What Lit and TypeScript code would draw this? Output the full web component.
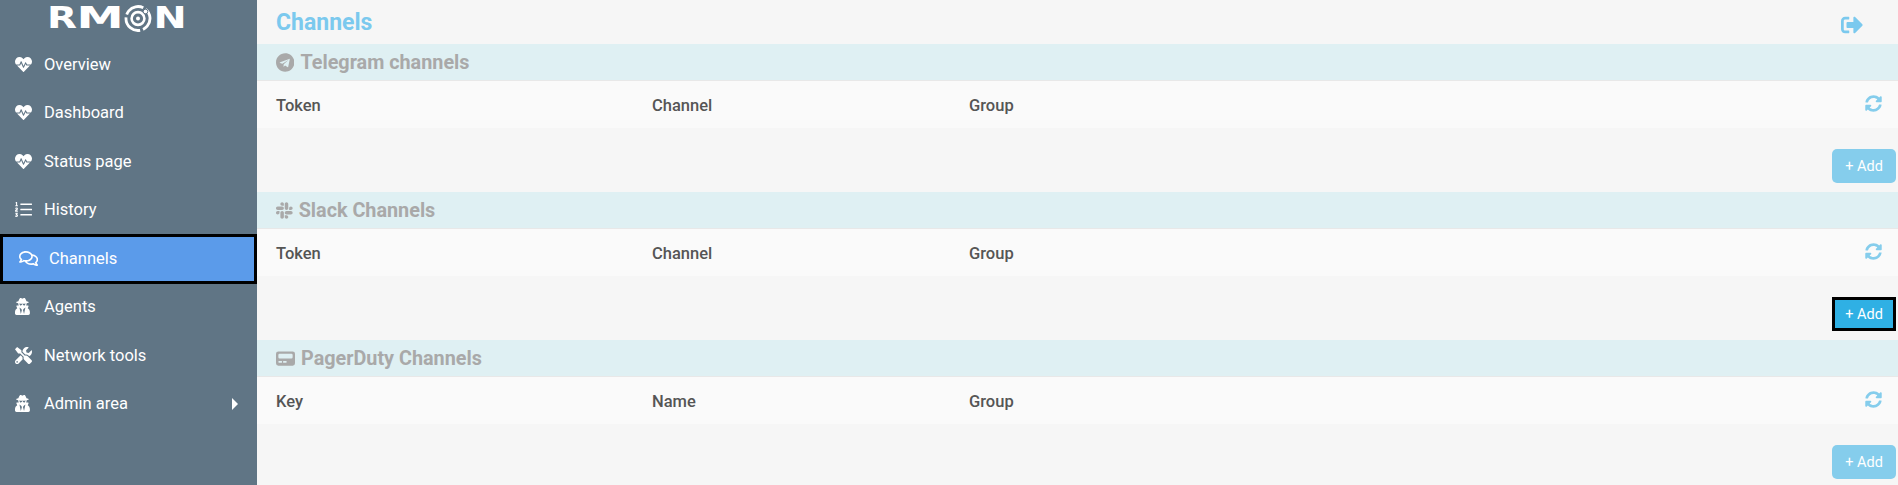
import { LitElement, html, css, svg } from "lit";
import { customElement } from "lit/decorators.js";

const ic = (vb: number, d: string, cls = "") =>
  html`<svg class="ic ${cls}" viewBox="0 0 ${vb} 512" fill="currentColor" aria-hidden="true">${svg`<path d="${d}"></path>`}</svg>`;

const P = {
  heart: "M320.2 243.8l-49.7 99.4c-6 12.1-23.4 11.7-28.9-.6l-56.9-126.3-30 71.7H60.6l182.5 186.5c7.1 7.3 18.6 7.3 25.7 0L451.4 288H342.3l-22.1-44.2zM473.7 73.9l-2.4-2.5c-51.5-52.6-135.8-52.6-187.4 0L256 100l-27.9-28.5c-51.5-52.7-135.9-52.7-187.4 0l-2.4 2.4C-10.4 123.7-12.5 203 31 256h102.4l35.9-86.2c5.4-12.9 23.6-13.2 29.4-.4l58.2 129.3 49-97.9c5.9-11.8 22.7-11.8 28.6 0l27.6 55.2H481c43.5-53 41.4-132.3-7.3-182.1z",
  list: "M61.77 401l17.5-20.15a19.92 19.92 0 0 0 5.07-14.19v-3.31C84.34 356 80.5 352 73 352H16a8 8 0 0 0-8 8v16a8 8 0 0 0 8 8h22.83a157.41 157.41 0 0 0-11 12.31l-5.61 7c-4 5.07-5.25 10.13-2.8 14.88l1.05 1.93c3 5.76 6.29 7.88 12.25 7.88h4.73c10.33 0 15.94 2.44 15.94 9.09 0 4.72-4.2 8.22-14.36 8.22a41.54 41.54 0 0 1-15.47-3.12c-6.49-3.88-11.74-3.5-15.6 3.12l-5.59 9.31c-3.72 6.13-3.19 11.72 2.63 15.94 7.71 4.69 20.38 9.44 37 9.44 34.16 0 48.5-22.75 48.5-44.12-.03-14.38-9.12-29.76-28.73-34.88zM500 232H172a12 12 0 0 0-12 12v24a12 12 0 0 0 12 12h328a12 12 0 0 0 12-12v-24a12 12 0 0 0-12-12zm0-160H172a12 12 0 0 0-12 12v24a12 12 0 0 0 12 12h328a12 12 0 0 0 12-12V84a12 12 0 0 0-12-12zm0 320H172a12 12 0 0 0-12 12v24a12 12 0 0 0 12 12h328a12 12 0 0 0 12-12v-24a12 12 0 0 0-12-12zM16 160h64a8 8 0 0 0 8-8v-16a8 8 0 0 0-8-8H64V40a8 8 0 0 0-8-8H32a8 8 0 0 0-7.14 4.42l-8 16A8 8 0 0 0 24 64h8v64H16a8 8 0 0 0-8 8v16a8 8 0 0 0 8 8zm-3.91 160H80a8 8 0 0 0 8-8v-16a8 8 0 0 0-8-8H41.32c3.29-10.29 48.68-18.68 48.68-56.44 0-29.06-25-39.56-44.47-39.56-21.36 0-33.8 10-40.46 18.75-4.37 5.59-3 10.84 2.8 15.37l8.58 6.88c5.61 4.56 11 2.47 16.12-2.44a13.44 13.44 0 0 1 9.46-3.84c3.33 0 9.28 1.56 9.28 8.75C51 248.19 0 257.31 0 304.59v4C0 316 5.08 320 12.09 320z",
  comments: "M532 386.2c27.5-27.1 44-61.1 44-98.2 0-80-76.5-146.1-176.2-157.9C368.3 72.5 294.3 32 208 32 93.1 32 0 103.6 0 192c0 37 16.5 71 44 98.2-15.3 30.7-37.3 54.5-37.7 54.9-6.3 6.7-8.1 16.5-4.4 25 3.6 8.5 12 14 21.2 14 53.5 0 96.7-20.2 125.2-38.8 9.2 2.1 18.7 3.7 28.4 4.9C208.1 407.6 281.8 448 368 448c20.8 0 40.8-2.4 59.8-6.8C456.3 459.7 499.4 480 553 480c9.2 0 17.5-5.5 21.2-14 3.6-8.5 1.9-18.3-4.4-25-.4-.3-22.5-24.1-37.8-54.8zm-392.8-92.3L122.1 305c-14.1 9.1-28.5 16.3-43.1 21.4 2.7-4.7 5.4-9.7 8-14.8l15.5-31.1L77.7 256C64.2 242.6 48 220.7 48 192c0-60.7 73.3-112 160-112s160 51.3 160 112-73.3 112-160 112c-16.5 0-33-1.9-49-5.6l-19.8-4.5zM498.3 352l-24.7 24.4 15.5 31.1c2.6 5.1 5.3 10.1 8 14.8-14.6-5.1-29-12.3-43.1-21.4l-17.1-11.1-19.9 4.6c-16 3.7-32.5 5.6-49 5.6-54 0-102.2-20.1-131.3-49.7C338 339.5 416 272.9 416 192c0-3.4-.4-6.7-.7-10C479.7 196.5 528 238.8 528 288c0 28.7-16.2 50.6-29.7 64z",
  secret: "M383.9 308.3l23.9-62.6c4-10.5-3.7-21.7-15-21.7h-58.5c11-18.9 17.8-40.6 17.8-64v-.3c39.2-7.8 64-19.1 64-31.7 0-13.3-27.3-25.1-70.1-33-9.2-32.8-27-65.8-40.6-82.8-9.5-11.9-25.9-15.6-39.5-8.8l-27.6 13.8c-9 4.5-19.6 4.5-28.6 0L182.1 3.4c-13.6-6.8-30-3.1-39.5 8.8-13.5 17-31.4 50-40.6 82.8-42.7 7.9-70 19.7-70 33 0 12.6 24.8 23.9 64 31.7v.3c0 23.4 6.8 45.1 17.8 64H56.3c-11.5 0-19.2 11.7-14.7 22.3l25.8 60.2C27.3 329.8 0 372.7 0 422.4v44.8C0 491.9 20.1 512 44.8 512h358.4c24.7 0 44.8-20.1 44.8-44.8v-44.8c0-48.4-25.8-90.4-64.1-114.1zM176 480l-41.6-192 49.6 32 24 40-32 120zm96 0l-32-120 24-40 49.6-32L272 480zm41.7-298.5c-3.9 11.9-7 24.6-16.5 33.4-10.1 9.3-48 22.4-64-25-2.8-8.4-15.4-8.4-18.3 0-17 50.2-56 32.4-64 25-9.5-8.8-12.7-21.5-16.5-33.4-.8-2.5-6.3-5.7-6.3-5.8v-10.8c28.3 3.6 61 5.8 96 5.8s67.7-2.1 96-5.8v10.8c-.1.1-5.6 3.2-6.4 5.8z",
  tools: "M501.1 395.7L384 278.6c-23.1-23.1-57.6-27.6-85.4-13.9L192 158.1V96L64 0 0 64l96 128h62.1l106.6 106.6c-13.6 27.8-9.2 62.3 13.9 85.4l117.1 117.1c14.6 14.6 38.2 14.6 52.7 0l52.7-52.7c14.5-14.6 14.5-38.2 0-52.7zM331.7 225c28.3 0 54.9 11 74.9 31l19.4 19.4c15.8-6.9 30.8-16.5 43.8-29.5 37.1-37.1 49.7-89.3 37.9-136.7-2.2-9-13.5-12.1-20.1-5.5l-74.4 74.4-67.9-11.3L334 98.9l74.4-74.4c6.6-6.6 3.4-17.9-5.7-20.2-47.4-11.7-99.6.9-136.6 37.9-28.5 28.5-41.9 66.1-41.2 103.6l82.1 82.1c8.1-1.9 16.5-2.9 24.7-2.9zm-103.9 82l-56.7-56.7L18.7 402.8c-25 25-25 65.5 0 90.5s65.5 25 90.5 0l123.6-123.6c-7.6-19.9-9.9-41.6-5-62.7zM64 472c-13.2 0-24-10.8-24-24 0-13.3 10.7-24 24-24s24 10.7 24 24c0 13.2-10.7 24-24 24z",
  telegram: "M248 8C111 8 0 119 0 256s111 248 248 248 248-111 248-248S385 8 248 8zm121.8 169.9l-40.7 191.8c-3 13.6-11.1 16.9-22.4 10.5l-62-45.7-29.9 28.8c-3.3 3.3-6.1 6.1-12.5 6.1l4.4-63.1 114.9-103.8c5-4.4-1.1-6.9-7.7-2.5l-142 89.4-61.2-19.1c-13.3-4.2-13.6-13.3 2.8-19.7l239.1-92.2c11.1-4 20.8 2.7 17.2 19.5z",
  slack: "M94.12 315.1c0 25.9-21.16 47.06-47.06 47.06S0 341 0 315.1c0-25.9 21.16-47.06 47.06-47.06h47.06v47.06zm23.72 0c0-25.9 21.16-47.06 47.06-47.06s47.06 21.16 47.06 47.06v117.84c0 25.9-21.16 47.06-47.06 47.06s-47.06-21.16-47.06-47.06V315.1zm47.06-188.98c-25.9 0-47.06-21.16-47.06-47.06S139 32 164.9 32s47.06 21.16 47.06 47.06v47.06H164.9zm0 23.72c25.9 0 47.06 21.16 47.06 47.06s-21.16 47.06-47.06 47.06H47.06C21.16 243.96 0 222.8 0 196.9s21.16-47.06 47.06-47.06H164.9zm188.98 47.06c0-25.9 21.16-47.06 47.06-47.06 25.9 0 47.06 21.16 47.06 47.06s-21.16 47.06-47.06 47.06h-47.06V196.9zm-23.72 0c0 25.9-21.16 47.06-47.06 47.06-25.9 0-47.06-21.16-47.06-47.06V79.06c0-25.9 21.16-47.06 47.06-47.06 25.9 0 47.06 21.16 47.06 47.06V196.9zM283.1 385.88c25.9 0 47.06 21.16 47.06 47.06 0 25.9-21.16 47.06-47.06 47.06-25.9 0-47.06-21.16-47.06-47.06v-47.06h47.06zm0-23.72c-25.9 0-47.06-21.16-47.06-47.06 0-25.9 21.16-47.06 47.06-47.06h117.84c25.9 0 47.06 21.16 47.06 47.06 0 25.9-21.16 47.06-47.06 47.06H283.1z",
  pager: "M448 64H64a64 64 0 0 0-64 64v256a64 64 0 0 0 64 64h384a64 64 0 0 0 64-64V128a64 64 0 0 0-64-64zM160 368H80a16 16 0 0 1-16-16v-16a16 16 0 0 1 16-16h80zm128-16a16 16 0 0 1-16 16h-80v-48h80a16 16 0 0 1 16 16zm160-128a32 32 0 0 1-32 32H96a32 32 0 0 1-32-32v-64a32 32 0 0 1 32-32h320a32 32 0 0 1 32 32z",
  sync: "M370.72 133.28C339.458 104.008 298.888 87.962 255.848 88c-77.458.068-144.328 53.178-162.791 126.85-1.344 5.363-6.122 9.15-11.651 9.15H24.103c-7.498 0-13.194-6.807-11.807-14.176C33.933 94.924 134.813 8 256 8c66.448 0 126.791 26.136 171.315 68.685L463.03 40.97C478.149 25.851 504 36.559 504 57.941V192c0 13.255-10.745 24-24 24H345.941c-21.382 0-32.09-25.851-16.971-40.971l41.75-41.749zM32 296h134.059c21.382 0 32.09 25.851 16.971 40.971l-41.75 41.75c31.262 29.273 71.835 45.319 114.876 45.28 77.418-.07 144.315-53.144 162.787-126.849 1.344-5.363 6.122-9.15 11.651-9.15h57.304c7.498 0 13.194 6.807 11.807 14.176C478.067 417.076 377.187 504 256 504c-66.448 0-126.791-26.136-171.315-68.685L48.97 471.03C33.851 486.149 8 475.441 8 454.059V320c0-13.255 10.745-24 24-24z",
  signout: "M497 273L329 441c-15 15-41 4.5-41-17v-96H152c-13.3 0-24-10.7-24-24v-96c0-13.3 10.7-24 24-24h136V88c0-21.4 25.9-32 41-17l168 168c9.3 9.4 9.3 24.6 0 34zM192 436v-40c0-6.6-5.4-12-12-12H96c-17.7 0-32-14.3-32-32V160c0-17.7 14.3-32 32-32h84c6.6 0 12-5.4 12-12V76c0-6.6-5.4-12-12-12H96c-53 0-96 43-96 96v192c0 53 43 96 96 96h84c6.6 0 12-5.4 12-12z",
};

const NAV = [
  { label: "Overview", icon: ic(512, P.heart) },
  { label: "Dashboard", icon: ic(512, P.heart) },
  { label: "Status page", icon: ic(512, P.heart) },
  { label: "History", icon: ic(512, P.list) },
  { label: "Channels", icon: ic(576, P.comments), active: true },
  { label: "Agents", icon: ic(448, P.secret) },
  { label: "Network tools", icon: ic(512, P.tools) },
  { label: "Admin area", icon: ic(448, P.secret), more: true },
];

const SECTIONS = [
  { title: "Telegram channels", icon: ic(496, P.telegram), cols: ["Token", "Channel", "Group"] },
  { title: "Slack Channels", icon: ic(448, P.slack), cols: ["Token", "Channel", "Group"], focus: true },
  { title: "PagerDuty Channels", icon: ic(512, P.pager), cols: ["Key", "Name", "Group"] },
];

@customElement("app-root")
export class AppRoot extends LitElement {
  static styles = css`
    :host {
      display: grid;
      grid-template-columns: 257px 1fr;
      height: 485px;
      overflow: hidden;
      font-family: Roboto, "Liberation Sans", sans-serif;
      background: #f6f6f6;
    }
    .ic { height: 1em; display: block; flex: none; }
    .side { background: #607585; color: #fff; }
    .logo {
      height: 40px;
      box-sizing: border-box;
      padding: 6px 0 0 49px;
      display: flex;
      align-items: flex-start;
      gap: 4px;
    }
    .ltr {
      font: 700 30px/24px "DejaVu Sans", sans-serif;
      display: block;
      text-align: center;
      height: 24px;
      transform-origin: center;
    }
    .ltr.r { width: 26px; transform: scaleX(1.3); }
    .ltr.m { width: 40px; margin-left: 1px; transform: scaleX(1.58); }
    .ltr.n { width: 28px; transform: scaleX(1.32); }
    .orb { width: 28px; height: 27px; flex: none; margin-top: -1px; }
    .nav { display: grid; grid-auto-rows: 48.5px; }
    .item {
      display: flex;
      align-items: center;
      padding-left: 15px;
      font-size: 16.5px;
      position: relative;
    }
    .item .ic { font-size: 17px; }
    .slot { width: 29px; flex: none; display: flex; justify-content: flex-start; }
    .item.active {
      background: #5b9bea;
      box-shadow: inset 0 0 0 3px #000;
      padding-left: 19px;
      height: 50px;
      box-sizing: border-box;
      padding-bottom: 1px;
    }
    .item.active .slot { width: 30px; }
    .caret {
      margin-left: auto;
      margin-right: 19px;
      width: 0;
      height: 0;
      border-left: 6px solid #fff;
      border-top: 6px solid transparent;
      border-bottom: 6px solid transparent;
    }
    .main { min-width: 0; }
    .top {
      height: 44px;
      display: flex;
      align-items: center;
      justify-content: space-between;
      padding: 0 35px 0 19px;
      color: #7bc9ee;
    }
    h1 { margin: 0; font-size: 23px; font-weight: 700; }
    .top .ic { font-size: 22px; margin-top: 6px; }
    .head {
      height: 37px;
      box-sizing: border-box;
      background: #dff0f3;
      border-bottom: 1px solid #e8e8e8;
      display: flex;
      align-items: center;
      gap: 6px;
      padding-left: 19px;
      color: #a9a9a9;
      font-size: 19.8px;
      font-weight: 700;
    }
    .head .ic { font-size: 19px; }
    .row {
      height: 47px;
      background: #fafafa;
      display: grid;
      grid-template-columns: 376px 317px 1fr auto;
      align-items: center;
      padding: 1px 16px 0 19px;
      box-sizing: border-box;
      color: #555;
      font-size: 16.5px;
      font-weight: 500;
    }
    .row .ic { font-size: 17px; color: #85cdec; margin-top: -3px; }
    .foot {
      height: 64px;
      display: flex;
      justify-content: flex-end;
      align-items: flex-start;
      padding: 21px 2px 0 0;
      box-sizing: border-box;
    }
    .add {
      width: 64px;
      height: 34px;
      border: none;
      border-radius: 5px;
      padding: 0;
      background: #85cdec;
      color: #fff;
      font: 400 14.5px Roboto, sans-serif;
    }
    .add.focus { background: #2fb0e4; border-radius: 0; box-shadow: inset 0 0 0 3px #000; }
  `;

  render() {
    return html`
      <aside class="side">
        <div class="logo">
          <span class="ltr r">R</span><span class="ltr m">M</span>
          <svg class="orb" viewBox="0 0 28 27" fill="none" stroke="#fff">
            <circle cx="14" cy="13.5" r="12" stroke-width="2.8" stroke-dasharray="24 3 22 3 20 3.4" transform="rotate(-50 14 13.5)"></circle>
            <circle cx="14" cy="13.5" r="6.4" stroke-width="2.6"></circle>
            <circle cx="14" cy="13.5" r="2" fill="#fff" stroke="none"></circle>
            <circle cx="21.5" cy="6.5" r="2.3" fill="#fff" stroke="#607585" stroke-width="1"></circle>
          </svg>
          <span class="ltr n">N</span>
        </div>
        <nav class="nav">
          ${NAV.map(
            (n) => html`<div class="item ${n.active ? "active" : ""}">
              <span class="slot">${n.icon}</span><span>${n.label}</span>
              ${n.more ? html`<span class="caret"></span>` : ""}
            </div>`
          )}
        </nav>
      </aside>
      <main class="main">
        <div class="top"><h1>Channels</h1>${ic(512, P.signout)}</div>
        ${SECTIONS.map(
          (s) => html`<section>
            <div class="head">${s.icon}<span>${s.title}</span></div>
            <div class="row">
              ${s.cols.map((c) => html`<span>${c}</span>`)}${ic(512, P.sync)}
            </div>
            <div class="foot"><button class="add ${s.focus ? "focus" : ""}">+ Add</button></div>
          </section>`
        )}
      </main>
    `;
  }
}
